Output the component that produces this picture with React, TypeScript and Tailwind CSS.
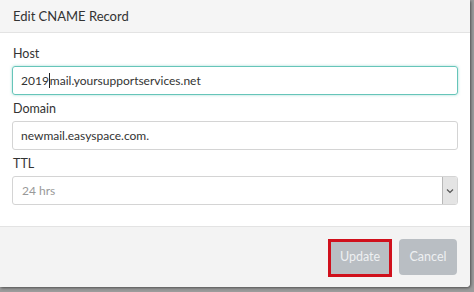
import React from "react";

const font = { fontFamily: "Lato, 'Open Sans', sans-serif" };

export default function App() {
  return (
    <div className="w-[474px] h-[292px] bg-[#9c9c9c] overflow-hidden" style={font}>
      <div className="w-[470px] h-[287px] bg-white rounded-br-[4px] shadow-[1px_1px_3px_rgba(0,0,0,0.5)] flex flex-col">
        <div className="h-[33px] bg-[#f5f5f5] border-b border-[#e3e3e3] px-[13px] flex items-center">
          <span className="text-[13px] text-[#333] pt-[1px]">Edit CNAME Record</span>
        </div>

        <div className="flex-1 px-[12px] pt-[12px] flex flex-col gap-[5px]">
          <div>
            <div className="h-[18px] text-[12.5px] leading-[18px] text-[#333] mb-[3px] pl-[1px]">Host</div>
            <div className="h-[29px] border border-[#66c5b9] rounded-[3px] shadow-[0_0_3px_rgba(102,197,185,0.6)] flex items-center pl-[8px] text-[12px] text-[#333]">
              <span>2019</span>
              <span className="inline-block w-[1px] h-[15px] bg-[#222]" />
              <span>mail.yoursupportservices.net</span>
            </div>
          </div>
          <div>
            <div className="h-[18px] text-[12.5px] leading-[18px] text-[#333] mb-[3px] pl-[1px]">Domain</div>
            <div className="h-[29px] border border-[#d4d4d4] rounded-[3px] flex items-center pl-[8px] text-[12px] text-[#333]">
              newmail.easyspace.com.
            </div>
          </div>
          <div>
            <div className="h-[18px] text-[12.5px] leading-[18px] text-[#333] mb-[3px] pl-[1px]">TTL</div>
            <div className="h-[29px] border border-[#d4d4d4] rounded-[3px] flex items-center text-[12px] text-[#999]">
              <span className="flex-1 pl-[9px]">24 hrs</span>
              <div className="w-[15px] h-full bg-[#e4e4e4] border-l border-[#b8b8b8] rounded-r-[2px] flex items-center justify-center">
                <svg width="8" height="6" viewBox="0 0 8 6">
                  <path d="M1 1.5 L4 4.5 L7 1.5" fill="none" stroke="#555" strokeWidth="1.2" />
                </svg>
              </div>
            </div>
          </div>
        </div>

        <div className="h-[61px] bg-[#f3f3f3] border-t border-[#e3e3e3] flex items-center justify-end gap-[7px] pr-[13px] rounded-br-[4px]">
          <div className="w-[64px] h-[38px] border-[3px] border-[#d0101c] bg-[#b9bec3] flex items-center justify-center mt-[1px]">
            <span className="text-[12.5px] text-[#eef0f2]">Update</span>
          </div>
          <div className="w-[58px] h-[36px] rounded-[4px] bg-[#b9bec3] flex items-center justify-center">
            <span className="text-[12.5px] text-[#eef0f2]">Cancel</span>
          </div>
        </div>
      </div>
    </div>
  );
}
